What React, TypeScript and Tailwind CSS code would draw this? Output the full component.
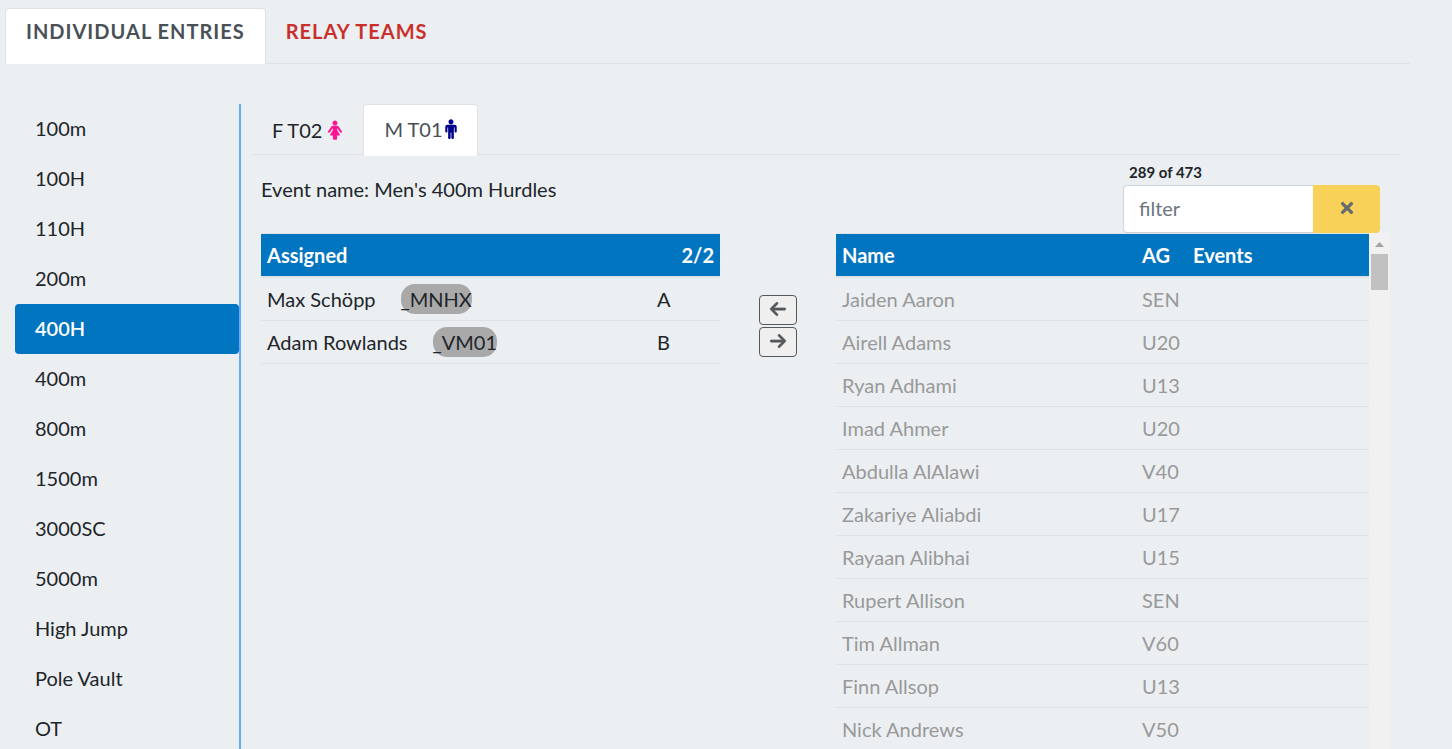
import { useState } from "react";
import { FaTimes } from "react-icons/fa";
import { FaArrowLeft, FaArrowRight } from "react-icons/fa6";

const EVENTS = [
  "100m",
  "100H",
  "110H",
  "200m",
  "400H",
  "400m",
  "800m",
  "1500m",
  "3000SC",
  "5000m",
  "High Jump",
  "Pole Vault",
  "OT",
];

const ASSIGNED = [
  { name: "Max Schöpp", bib: "_MNHX", slot: "A" },
  { name: "Adam Rowlands", bib: "_VM01", slot: "B" },
];

const ATHLETES = [
  { name: "Jaiden Aaron", ag: "SEN" },
  { name: "Airell Adams", ag: "U20" },
  { name: "Ryan Adhami", ag: "U13" },
  { name: "Imad Ahmer", ag: "U20" },
  { name: "Abdulla AlAlawi", ag: "V40" },
  { name: "Zakariye Aliabdi", ag: "U17" },
  { name: "Rayaan Alibhai", ag: "U15" },
  { name: "Rupert Allison", ag: "SEN" },
  { name: "Tim Allman", ag: "V60" },
  { name: "Finn Allsop", ag: "U13" },
  { name: "Nick Andrews", ag: "V50" },
];

const TABLE = "table-fixed border-separate border-spacing-0 border-t border-[#dee2e6]";
const TH = "h-11 border-b-2 border-[#dee2e6] bg-[#0275c0] bg-clip-padding px-[6px] text-white";
const TD = "h-[43px] border-b border-[#dee2e6] px-[6px] pb-px";

function FemaleIcon() {
  return (
    <svg viewBox="0 -1536 1280 1792" className="h-5 w-[14px] text-[#ff1493]" fill="currentColor" aria-hidden="true">
      <path
        transform="scale(1 -1)"
        d="M1280 480q0 -40 -28 -68t-68 -28q-51 0 -80 43l-227 341h-45v-132l247 -411q9 -15 9 -33q0 -26 -19 -45t-45 -19h-192v-272q0 -46 -33 -79t-79 -33h-160q-46 0 -79 33t-33 79v272h-192q-26 0 -45 19t-19 45q0 18 9 33l247 411v132h-45l-227 -341q-29 -43 -80 -43 q-40 0 -68 28t-28 68q0 29 16 53l256 384q73 107 176 107h384q103 0 176 -107l256 -384q16 -24 16 -53zM864 1280q0 -93 -65.5 -158.5t-158.5 -65.5t-158.5 65.5t-65.5 158.5t65.5 158.5t158.5 65.5t158.5 -65.5t65.5 -158.5z"
      />
    </svg>
  );
}

function MaleIcon() {
  return (
    <svg viewBox="0 -1536 1024 1792" className="h-5 w-3 text-[#00008b]" fill="currentColor" aria-hidden="true">
      <path
        transform="scale(1 -1)"
        d="M1024 832v-416q0 -40 -28 -68t-68 -28t-68 28t-28 68v352h-64v-912q0 -46 -33 -79t-79 -33t-79 33t-33 79v464h-64v-464q0 -46 -33 -79t-79 -33t-79 33t-33 79v912h-64v-352q0 -40 -28 -68t-68 -28t-68 28t-28 68v416q0 80 56 136t136 56h640q80 0 136 -56t56 -136z M736 1280q0 -93 -65.5 -158.5t-158.5 -65.5t-158.5 65.5t-65.5 158.5t65.5 158.5t158.5 65.5t158.5 -65.5t65.5 -158.5z"
      />
    </svg>
  );
}

function EventList() {
  const [current, setCurrent] = useState("400H");

  return (
    <nav aria-label="Events" className="w-[226px] shrink-0 border-r-2 border-[#66a8ff]">
      <ul>
        {EVENTS.map((name) => (
          <li key={name}>
            <a
              href={`#${name}`}
              onClick={() => setCurrent(name)}
              className={
                name === current
                  ? "block rounded bg-[#0275c0] px-5 pt-[9px] pb-[11px] font-semibold text-white"
                  : "block px-5 pt-[9px] pb-[11px]"
              }
            >
              {name}
            </a>
          </li>
        ))}
      </ul>
    </nav>
  );
}

function AssignedTable() {
  return (
    <table className={`w-full ${TABLE}`}>
      <thead>
        <tr>
          <th className={`${TH} text-left`}>Assigned</th>
          <th className={`${TH} w-[69px] text-right`}>2/2</th>
        </tr>
      </thead>
      <tbody>
        {ASSIGNED.map((row) => (
          <tr key={row.name}>
            <td className={TD}>
              {row.name}
              <span className="ml-[25px] inline-block rounded-[14px] bg-[#a9a9a9]">{row.bib}</span>
            </td>
            <td className={TD}>{row.slot}</td>
          </tr>
        ))}
      </tbody>
    </table>
  );
}

function AthleteTable() {
  return (
    <div className="flex">
      <table className={`flex-1 ${TABLE}`}>
        <thead>
          <tr className="text-left">
            <th className={TH}>Name</th>
            <th className={`${TH} w-[51px]`}>AG</th>
            <th className={`${TH} w-[182px]`}>Events</th>
          </tr>
        </thead>
        <tbody className="text-[#999999]">
          {ATHLETES.map((a) => (
            <tr key={a.name}>
              <td className={TD}>{a.name}</td>
              <td className={TD}>{a.ag}</td>
              <td className={TD} />
            </tr>
          ))}
        </tbody>
      </table>
      <div className="flex w-[21px] flex-col items-center bg-[#f1f1f1]">
        <svg viewBox="0 0 17 21" className="h-[21px] w-[17px] text-[#a3a3a3]" aria-hidden="true">
          <path d="M4 14h9L8.500 9z" fill="currentColor" />
        </svg>
        <div className="h-9 w-[17px] bg-[#c1c1c1]" />
      </div>
    </div>
  );
}

export default function App() {
  const [filter, setFilter] = useState("");

  return (
    <div className="h-screen overflow-hidden bg-[#ebeff2] pt-2 pr-[42px] pl-[5px] font-[Lato,sans-serif] text-[20px] leading-[30px] text-[#212529]">
      <div role="tablist" className="flex h-14 border-b border-[#dee2e6] font-bold tracking-wider">
        <button
          role="tab"
          aria-selected="true"
          className="h-14 rounded-t border border-b-0 border-[#dee2e6] bg-white px-5 pb-[11px] text-[#495057]"
        >
          INDIVIDUAL ENTRIES
        </button>
        <button role="tab" aria-selected="false" className="h-14 px-5 pb-[10px] text-[#c9302c]">
          RELAY TEAMS
        </button>
      </div>

      <div className="mt-10 flex gap-[10px] px-[10px]">
        <EventList />

        <main className="min-w-0 flex-1">
          <div role="tablist" className="flex h-[51px] border-b border-[#dee2e6]">
            <button role="tab" aria-selected="false" className="flex h-[52px] items-center gap-[6px] px-[21px] pb-px">
              F T02
              <FemaleIcon />
            </button>
            <button
              role="tab"
              aria-selected="true"
              className="flex h-[52px] items-center gap-[2px] rounded-t border border-b-0 border-[#dee2e6] bg-white px-5 pb-[3px] text-[#495057]"
            >
              M T01
              <MaleIcon />
            </button>
          </div>

          <div className="grid grid-cols-[459fr_116fr_554fr] items-start px-[10px]">
            <p className="col-span-2 pt-[19px]">Event name: Men's 400m Hurdles</p>
            <div className="flex justify-end pt-[6px] pr-[10px]">
              <div>
                <label htmlFor="filter" className="block pl-[6px] text-[15px] leading-[22px] font-bold">
                  289 of 473
                </label>
                <div className="mt-[2px] flex h-12">
                  <input
                    id="filter"
                    type="text"
                    placeholder="filter"
                    value={filter}
                    onChange={(e) => setFilter(e.target.value)}
                    className="w-[190px] rounded-l border border-r-0 border-[#ced4da] bg-white px-[15px] pb-[2px] placeholder:text-[#6c757d]"
                  />
                  <button
                    type="button"
                    aria-label="Clear filter"
                    onClick={() => setFilter("")}
                    className="flex w-[67px] items-center justify-center rounded-r bg-[#f8d159] pb-[2px] text-[#666b70]"
                  >
                    <FaTimes className="size-[18px]" />
                  </button>
                </div>
              </div>
            </div>

            <AssignedTable />
            <div className="flex flex-col items-center gap-[2px] pt-[62px]">
              <button
                type="button"
                aria-label="Assign athlete"
                className="flex h-[30px] w-[38px] items-center justify-center rounded border border-[#55595c] bg-[#efefef] pr-px pb-[2px] text-[#55595c]"
              >
                <FaArrowLeft className="size-[18px] stroke-current stroke-[16]" />
              </button>
              <button
                type="button"
                aria-label="Remove athlete"
                className="flex h-[30px] w-[38px] items-center justify-center rounded border border-[#55595c] bg-[#efefef] pr-px pb-[2px] text-[#55595c]"
              >
                <FaArrowRight className="size-[18px] stroke-current stroke-[16]" />
              </button>
            </div>
            <AthleteTable />
          </div>
        </main>
      </div>
    </div>
  );
}
